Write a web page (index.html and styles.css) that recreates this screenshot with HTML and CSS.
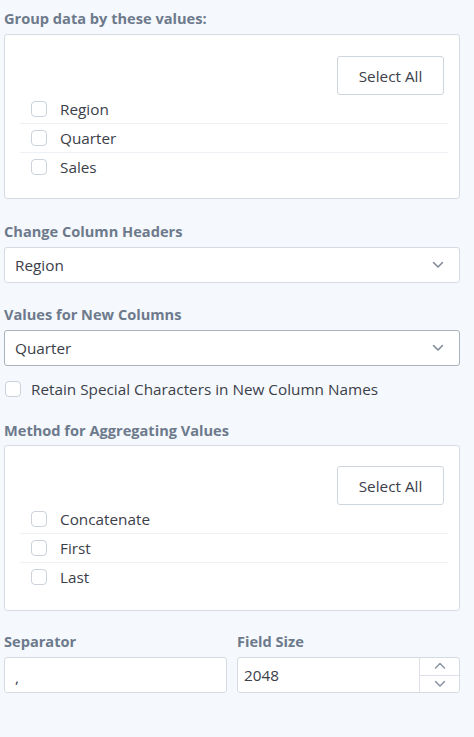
FILE: index.html
```html
<!DOCTYPE html>
<html>
<head>
<meta charset="utf-8">
<link rel="stylesheet" href="styles.css">
</head>
<body>
<div class="panel">
  <div class="label first">Group data by these values:</div>
  <div class="box">
    <div class="btn-row"><button class="btn">Select All</button></div>
    <ul class="list">
      <li class="item"><span class="cb"></span><span>Region</span></li>
      <li class="item"><span class="cb"></span><span>Quarter</span></li>
      <li class="item"><span class="cb"></span><span>Sales</span></li>
    </ul>
  </div>

  <div class="label sec">Change Column Headers</div>
  <div class="select"><span>Region</span>
    <svg class="chev" width="12" height="8" viewBox="0 0 12 8"><path d="M1.5 1.5 L6 6 L10.5 1.5" fill="none" stroke="#7d8796" stroke-width="1.5" stroke-linecap="round" stroke-linejoin="round"/></svg>
  </div>

  <div class="label sec2">Values for New Columns</div>
  <div class="select focus"><span>Quarter</span>
    <svg class="chev" width="12" height="8" viewBox="0 0 12 8"><path d="M1.5 1.5 L6 6 L10.5 1.5" fill="none" stroke="#7d8796" stroke-width="1.5" stroke-linecap="round" stroke-linejoin="round"/></svg>
  </div>

  <div class="retain"><span class="cb"></span><span>Retain Special Characters in New Column Names</span></div>

  <div class="label sec3">Method for Aggregating Values</div>
  <div class="box box2">
    <div class="btn-row"><button class="btn">Select All</button></div>
    <ul class="list">
      <li class="item"><span class="cb"></span><span>Concatenate</span></li>
      <li class="item"><span class="cb"></span><span>First</span></li>
      <li class="item"><span class="cb"></span><span>Last</span></li>
    </ul>
  </div>

  <div class="fields">
    <div class="field">
      <div class="label">Separator</div>
      <div class="input"><span class="comma">,</span></div>
    </div>
    <div class="field">
      <div class="label">Field Size</div>
      <div class="input num">
        <span class="numval">2048</span>
        <div class="spin">
          <div class="spin-btn"><svg width="12" height="8" viewBox="0 0 12 8"><path d="M1.5 6 L6 1.5 L10.5 6" fill="none" stroke="#8a94a3" stroke-width="1.5" stroke-linecap="round" stroke-linejoin="round"/></svg></div>
          <div class="spin-btn down"><svg width="12" height="8" viewBox="0 0 12 8"><path d="M1.5 1.5 L6 6 L10.5 1.5" fill="none" stroke="#8a94a3" stroke-width="1.5" stroke-linecap="round" stroke-linejoin="round"/></svg></div>
        </div>
      </div>
    </div>
  </div>
</div>
</body>
</html>
```

FILE: styles.css
```css
html, body {
  margin: 0;
  padding: 0;
  background: #f5f8fc;
}
body {
  font-family: "Open Sans", "Noto Sans", sans-serif;
  font-size: 15.3px;
  color: #3b4049;
}
.panel {
  width: 456px;
  padding: 8px 0 0 4px;
  display: flex;
  flex-direction: column;
}
.label {
  font-weight: 700;
  color: #6d7a8c;
  font-size: 14.6px;
  line-height: 20px;
  margin-bottom: 6px;
}
.sec { margin-top: 22px; }
.sec2 { margin-top: 21px; }
.sec3 { margin-top: 23px; margin-bottom: 5px; }
.box {
  background: #fff;
  border: 1px solid #d6dbe2;
  border-radius: 3px;
  height: 165px;
  box-sizing: border-box;
  padding: 21px 11px 0 15px;
}
.box2 { height: 166px; padding-top: 20px; }
.btn-row {
  display: flex;
  justify-content: flex-end;
  padding-right: 4px;
}
.btn {
  width: 107px;
  height: 39px;
  background: #fff;
  border: 1px solid #cfd5dd;
  border-radius: 3px;
  font-family: inherit;
  font-size: 15.3px;
  color: #3b4049;
  padding: 0;
}
.list {
  list-style: none;
  margin: 0;
  padding: 0;
}
.item {
  height: 29px;
  display: flex;
  align-items: center;
  gap: 13px;
  padding-left: 11px;
  padding-bottom: 1px;
  box-sizing: border-box;
  border-bottom: 1px solid #eef1f5;
}
.item:last-child { border-bottom: none; }
.cb {
  width: 16px;
  height: 16px;
  box-sizing: border-box;
  border: 1px solid #cbd2dc;
  border-radius: 4px;
  background: #fff;
  flex: none;
}
.select {
  height: 36px;
  box-sizing: border-box;
  background: #fff;
  border: 1px solid #d6dbe2;
  border-radius: 3px;
  display: flex;
  align-items: center;
  justify-content: space-between;
  padding: 0 15px 0 10px;
}
.select.focus { border-color: #aab1bc; }
.chev { display: block; }
.retain {
  margin-top: 15px;
  display: flex;
  align-items: center;
  gap: 10px;
  padding-left: 1px;
  height: 16px;
}
.fields {
  margin-top: 20px;
  display: grid;
  grid-template-columns: 223px 223px;
  gap: 10px;
}
.input {
  height: 36px;
  box-sizing: border-box;
  background: #fff;
  border: 1px solid #d6dbe2;
  border-radius: 3px;
  display: flex;
  align-items: center;
  padding-left: 10px;
}
.comma { position: relative; top: 2px; }
.num { padding-left: 0; justify-content: space-between; }
.numval { padding-left: 6px; }
.spin {
  width: 39px;
  height: 100%;
  border-left: 1px solid #dde1e7;
  display: flex;
  flex-direction: column;
}
.spin-btn {
  flex: 1;
  display: flex;
  align-items: center;
  justify-content: center;
}
.spin-btn.down { border-top: 1px solid #dde1e7; }
```
